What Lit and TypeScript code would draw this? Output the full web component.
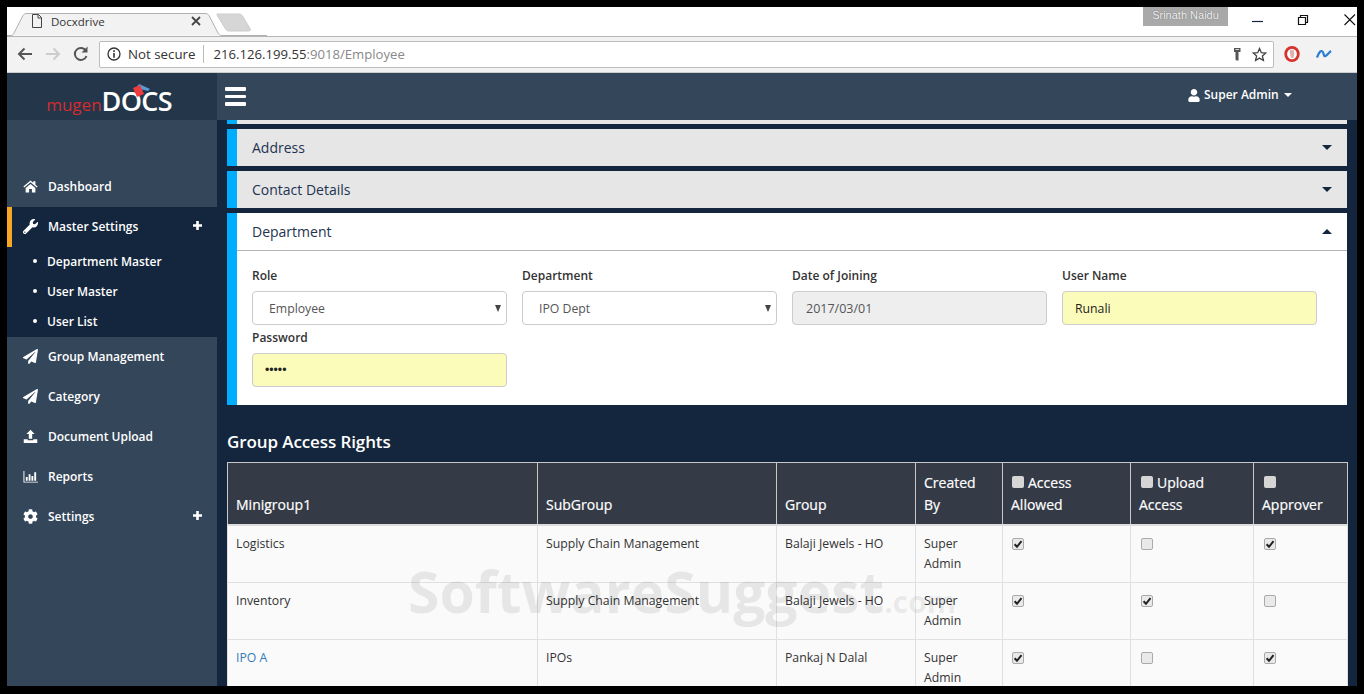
import { LitElement, html, css, svg } from "lit";
import { customElement } from "lit/decorators.js";

const FA = {
  plane: svg`<svg viewBox="0 0 512 512"><path d="M476 3.2L12.5 270.6c-18.1 10.4-15.8 35.6 2.2 43.2L121 358.4l287.3-253.2c5.5-4.9 13.3 2.6 8.6 8.3L176 407v80.5c0 23.6 28.5 32.9 42.5 15.8L282 426l124.6 52.2c14.2 6 30.4-2.9 33-18.2l72-432C515 7.8 493.3-6.8 476 3.2z"/></svg>`,
  wrench: svg`<svg viewBox="0 0 512 512"><path d="M507.73 109.1c-2.24-9.03-13.54-12.09-20.12-5.51l-74.36 74.36-67.88-11.31-11.31-67.88 74.36-74.36c6.62-6.62 3.43-17.9-5.66-20.16-47.38-11.74-99.55.91-136.58 37.93-39.64 39.64-50.55 97.1-34.05 147.2L18.74 402.76c-24.99 24.99-24.99 65.51 0 90.5 24.99 24.99 65.51 24.99 90.5 0l213.21-213.21c50.12 16.71 107.47 5.68 147.37-34.22 37.07-37.07 49.7-89.32 37.91-136.73zM64 472c-13.25 0-24-10.75-24-24 0-13.26 10.75-24 24-24s24 10.74 24 24c0 13.25-10.75 24-24 24z"/></svg>`,
  cog: svg`<svg viewBox="0 0 512 512"><path d="M487.4 315.7l-42.6-24.6c4.3-23.2 4.3-47 0-70.2l42.6-24.6c4.9-2.8 7.1-8.6 5.5-14-11.1-35.6-30-67.8-54.7-94.6-3.8-4.1-10-5.1-14.8-2.3L380.8 110c-17.9-15.4-38.5-27.3-60.8-35.1V25.8c0-5.6-3.9-10.5-9.4-11.7-36.7-8.2-74.3-7.8-109.2 0-5.5 1.2-9.4 6.1-9.4 11.7V75c-22.2 7.9-42.8 19.8-60.8 35.1L88.7 85.5c-4.9-2.8-11-1.9-14.8 2.3-24.7 26.7-43.6 58.9-54.7 94.6-1.7 5.4.6 11.2 5.5 14L67.3 221c-4.3 23.2-4.3 47 0 70.2l-42.6 24.6c-4.9 2.8-7.1 8.6-5.5 14 11.1 35.6 30 67.8 54.7 94.6 3.8 4.1 10 5.1 14.8 2.3l42.6-24.6c17.9 15.4 38.5 27.3 60.8 35.1v49.2c0 5.6 3.9 10.5 9.4 11.7 36.7 8.2 74.3 7.8 109.2 0 5.5-1.2 9.4-6.1 9.4-11.7v-49.2c22.2-7.9 42.8-19.8 60.8-35.1l42.6 24.6c4.9 2.8 11 1.9 14.8-2.3 24.7-26.7 43.6-58.9 54.7-94.6 1.5-5.5-.7-11.3-5.6-14.1zM256 336c-44.1 0-80-35.9-80-80s35.9-80 80-80 80 35.9 80 80-35.9 80-80 80z"/></svg>`,
  home: svg`<svg viewBox="0 0 16 16"><path fill-rule="evenodd" d="M8 1.600 0.400 8.100 1.300 9.100 8 3.500 14.700 9.100 15.600 8.100 13.200 6V2.400H11V4.100ZM2.800 9.600V14.400H6.500V10.600H9.500V14.400H13.200V9.600L8 5.200Z"/></svg>`,
  upload: svg`<svg viewBox="0 0 16 16"><path d="M8 .8 3.600 5.400H6.200V10.400H9.800V5.400H12.400ZM.8 11H5V12H11V11H15.200V15H.8Z"/></svg>`,
  chart: svg`<svg viewBox="0 0 16 16"><path d="M.5 2H1.500V13.500H16V14.500H.5ZM3 8.500H5V12.500H3ZM6 5.500H8V12.500H6ZM9 7.500H11V12.500H9ZM12 3.500H14V12.500H12Z"/></svg>`,
  user: svg`<svg viewBox="0 0 448 512"><path d="M224 256c70.700 0 128-57.300 128-128S294.700 0 224 0 96 57.300 96 128s57.300 128 128 128zm89.600 32h-16.700c-22.200 10.200-46.900 16-72.900 16s-50.600-5.800-72.900-16h-16.700C60.200 288 0 348.200 0 422.400V464c0 26.500 21.500 48 48 48h352c26.500 0 48-21.500 48-48v-41.600c0-74.200-60.200-134.400-134.400-134.400z"/></svg>`,
};

const check = svg`<svg viewBox="0 0 12 12"><path d="M2.600 6.200 5 8.800 9.500 3.200" fill="none" stroke="#222" stroke-width="2"/></svg>`;

const rows = [
  { mini: "Logistics", sub: "Supply Chain Management", group: "Balaji Jewels - HO", a: true, u: false, p: true },
  { mini: "Inventory", sub: "Supply Chain Management", group: "Balaji Jewels - HO", a: true, u: true, p: false },
  { mini: "IPO A", sub: "IPOs", group: "Pankaj N Dalal", a: true, u: false, p: true, link: true },
];

@customElement("app-root")
export class AppRoot extends LitElement {
  static styles = css`
    :host { display: block; width: 1364px; height: 694px; background: #000; padding: 7px 7px 8px 7px; box-sizing: border-box; overflow: hidden; font-family: "Open Sans", "Noto Sans", sans-serif; position: relative; }
    * { box-sizing: border-box; }
    .frame { height: 679px; display: flex; flex-direction: column; overflow: hidden; }

    .tabstrip { height: 29px; background: #fff; flex: none; position: relative; }
    .tabshape { position: absolute; left: 0; top: 0; }
    .tab { position: absolute; left: 24px; top: 6px; height: 16px; width: 175px; display: flex; align-items: center; gap: 8px; font-size: 11.500px; color: #333; }
    .tab svg { width: 12px; height: 14px; flex: none; }
    .tab .x { position: absolute; left: 160px; top: 1px; width: 10px; height: 10px; margin-top: 2px; }
    .badge { position: absolute; left: 1136px; top: 0; width: 85px; height: 19px; background: #a9a9a9; color: #f4f4f4; font-size: 11px; line-height: 17px; text-align: center; font-family: "Liberation Sans", sans-serif; text-shadow: 0 0 1px #555; }
    .win { position: absolute; top: 6px; width: 14px; height: 14px; }
    .toolbar { height: 37px; flex: none; background: #f2f2f2; border-top: 1px solid #b5b5b5; border-bottom: 1px solid #ccc; position: relative; display: flex; align-items: center; }
    .nav { position: absolute; top: 8px; width: 18px; height: 18px; }
    .omni { position: absolute; left: 92px; top: 4px; width: 1175px; height: 27px; background: #fff; border: 1px solid #bdbdbd; border-radius: 2px; display: flex; align-items: center; padding-bottom: 1px; color: #333; }
    .omni .info { width: 14px; height: 14px; margin: 0 7px 0 7px; flex: none; }
    .omni .ns { padding-right: 8px; border-right: 1px solid #bbb; line-height: 18px; margin-right: 9px; font-size: 13.300px; }
    .omni .url { font-size: 13.150px; color: #333; }
    .omni .url span { color: #888; }
    .omni .key { position: absolute; left: 1131px; top: 5px; width: 12px; height: 15px; }
    .omni .star { position: absolute; left: 1152px; top: 5px; width: 15px; height: 15px; }
    .ext { position: absolute; top: 8px; width: 18px; height: 18px; }

    .app { flex: 1; display: flex; min-height: 0; position: relative; }
    .side { width: 210px; flex: none; background: #34465a; display: flex; flex-direction: column; color: #fff; }
    .logo { height: 47px; background: #24364a; flex: none; position: relative; display: flex; align-items: baseline; justify-content: center; padding: 10px 6px 0 0; }
    .logo .mu { color: #d52b2f; font-size: 17px; font-weight: 500; line-height: 36px; }
    .logo .do { color: #fff; font-size: 27px; font-weight: 600; line-height: 36px; letter-spacing: -.7px; }
    .logo .mark { position: absolute; left: 124px; top: 11px; width: 19px; height: 14px; }
    .menu { margin-top: 47px; }
    .item { height: 40px; display: flex; align-items: center; padding: 0 0 2px 16px; font-size: 12px; font-weight: 600; position: relative; }
    .item > svg:first-child { width: 15px; height: 15px; fill: #fff; flex: none; margin-right: 10px; }
    .item.active { background: #14263d; border-left: 5px solid #f5a623; padding-left: 11px; }
    .plus { position: absolute; right: 15px; top: 14px; width: 9px; height: 9px; fill: #fff; }
    .subs { background: #14263d; }
    .sub { height: 30px; display: flex; align-items: center; padding: 0 0 2px 40px; font-size: 12px; font-weight: 600; position: relative; }
    .sub::before { content: ""; position: absolute; left: 26px; top: 12px; width: 4px; height: 4px; border-radius: 50%; background: #fff; }

    .mainwrap { flex: 1; display: flex; flex-direction: column; min-width: 0; background: #14263d; }
    .topbar { height: 47px; background: #34465a; flex: none; position: relative; color: #fff; }
    .burger { position: absolute; left: 8px; top: 14px; width: 21px; display: flex; flex-direction: column; gap: 4px; }
    .burger i { display: block; height: 3.500px; background: #fff; border-radius: 1px; }
    .usr { position: absolute; left: 971px; top: 13px; display: flex; align-items: center; font-size: 12px; font-weight: 600; line-height: 18px; }
    .usr svg { width: 12px; height: 13px; fill: #fff; margin-right: 4px; }
    .usr .caret { width: 0; height: 0; border-left: 4px solid transparent; border-right: 4px solid transparent; border-top: 4px solid #fff; margin-left: 5px; }

    .content { flex: 1; padding: 0 10px; overflow: hidden; min-height: 0; }
    .strip { height: 4px; background: #e6e6e6; border-left: 10px solid #00aeff; margin-bottom: 5px; }
    .panel { border-left: 10px solid #00aeff; background: #e6e6e6; margin-bottom: 5px; }
    .panel.open { background: #fff; margin-bottom: 0; }
    .phead { height: 37px; display: flex; align-items: center; justify-content: space-between; padding: 0 15px; font-size: 14px; color: #1e3350; }
    .open .phead { height: 38px; border-bottom: 1px solid #b5b5b5; }
    .tri { width: 0; height: 0; border-left: 5px solid transparent; border-right: 5px solid transparent; border-top: 5px solid #14263d; }
    .tri.up { border-top: 0; border-bottom: 5px solid #14263d; }
    .pbody { padding: 15px 15px 18px; display: grid; grid-template-columns: repeat(4, 255px); column-gap: 15px; row-gap: 3px; }
    .field label { display: block; font-size: 12px; font-weight: 600; line-height: 20px; margin-bottom: 5px; color: #333; }
    .ctl { width: 100%; height: 34px; border: 1px solid #ccc; border-radius: 4px; background: #fff; font: 12.250px "Open Sans", sans-serif; color: #555; padding: 0 16px; appearance: none; outline: none; display: block; }
    .ctl.dis { background: #eee; padding: 0 13px; font-size: 12.500px; }
    .ctl.auto { background: #fbfcb9; padding: 0 12px; color: #222; }
    .pw { font-family: "Liberation Sans", sans-serif; color: #000; }
    .selwrap { position: relative; }
    .selwrap::after { content: ""; position: absolute; right: 6px; top: 14px; border-left: 3.500px solid transparent; border-right: 3.500px solid transparent; border-top: 7px solid #444; }

    h2 { margin: 25px 0 8px; font-size: 17px; font-weight: 600; color: #fff; line-height: 24px; letter-spacing: -.1px; }
    table { border-collapse: collapse; table-layout: fixed; width: 1120px; background: #fafafa; font-size: 12.250px; color: #333; }
    th { background: #343a46; color: #fff; font-size: 14px; font-weight: 400; text-align: left; vertical-align: bottom; padding: 9px 8px 8px; line-height: 22px; border: 1px solid #c8c8c8; border-bottom: 2px solid #ddd; -webkit-text-stroke: .2px #fff; }
    td { padding: 8px; line-height: 20px; vertical-align: top; border: 1px solid #e0e0e0; height: 57px; }
    a { color: #337ab7; text-decoration: none; }
    .hb { display: inline-block; width: 12px; height: 12px; background: #d5d5d5; border-radius: 2px; margin: 0 4px 0 1px; }
    .hb.block { display: block; margin-top: 0; margin-bottom: 6px; }
    th:nth-child(n+6) .hb { margin-left: 2px; }
    .cb { display: block; width: 12px; height: 12px; margin: 4px 0 0 1px; border: 1px solid #aaa; border-radius: 2px; background: #e9e9e9; }
    td:nth-child(n+6) .cb { margin-left: 2px; }
    .cb svg { display: block; width: 12px; height: 12px; margin: -1px; }
    .wm { position: absolute; left: 401px; top: 483px; color: rgba(0,0,0,.08); font-weight: 700; font-size: 57px; line-height: 70px; white-space: nowrap; pointer-events: none; }
    .wm small { font-size: 30px; font-weight: 700; }
  `;

  render() {
    const item = (icon: unknown, label: string, plus = false, active = false) => html`
      <div class="item ${active ? "active" : ""}">${icon}<span>${label}</span>
        ${plus ? html`<svg class="plus" viewBox="0 0 9 9"><path d="M3.200 0H5.800V3.200H9V5.800H5.800V9H3.200V5.800H0V3.200H3.200Z"/></svg>` : ""}
      </div>`;
    return html`
      <div class="frame">
        <div class="tabstrip">
          <svg class="tabshape" width="260" height="29" viewBox="0 0 260 29">
            <path d="M0 28.500H4C6 28.500 6.500 27 7 26L16 8.500C17 7 18 6.500 20 6.500H198C200 6.500 201 7 202 8.500L211 26C212 27.500 213 28.500 215 28.500H260" fill="#f2f2f2" stroke="#b0b0b0"/>
            <path d="M210 7H232C234 7 235 8 236 10L243 21.500C244 23.500 243 24 241 24H222C220 24 219 23 218 21L210 8Z" fill="#d6d6d6" stroke="#ccc"/>
          </svg>
          <div class="tab">
            <svg viewBox="0 0 12 14"><path d="M1.500 .5H7.500L10.500 3.500V13.500H1.500ZM7 .5V4H10.500" fill="none" stroke="#444"/></svg>
            <span>Docxdrive</span>
            <svg class="x" viewBox="0 0 10 10"><path d="M1 1 9 9M9 1 1 9" stroke="#444" stroke-width="1.800"/></svg>
          </div>
          <div class="badge">Srinath Naidu</div>
          <svg class="win" style="left:1244px" viewBox="0 0 14 14"><path d="M1 8.500H12" stroke="#14263d" stroke-width="1.200"/></svg>
          <svg class="win" style="left:1289px" viewBox="0 0 14 14"><path d="M2.500 4.500H9.500V11.500H2.500ZM4.500 4.500V2.500H11.500V9.500H9.500" fill="none" stroke="#111" stroke-width="1.200"/></svg>
          <svg class="win" style="left:1336px" viewBox="0 0 14 14"><path d="M1.500 1.500 12 12M12 1.500 1.500 12" stroke="#111" stroke-width="1.100"/></svg>
        </div>
        <div class="toolbar">
          <svg class="nav" style="left:9px" viewBox="0 0 18 18"><path d="M16 9H3M8.500 3.500 3 9 8.500 14.500" fill="none" stroke="#555" stroke-width="2"/></svg>
          <svg class="nav" style="left:37px" viewBox="0 0 18 18"><path d="M2 9H15M9.500 3.500 15 9 9.500 14.500" fill="none" stroke="#ccc" stroke-width="2"/></svg>
          <svg class="nav" style="left:65px" viewBox="0 0 18 18"><path d="M14.500 11A6 6 0 1 1 14 5.800" fill="none" stroke="#555" stroke-width="2"/><path d="M15.500 1.500V7.500H9.500Z" fill="#555"/></svg>
          <div class="omni">
            <svg class="info" viewBox="0 0 14 14"><circle cx="7" cy="7" r="6" fill="none" stroke="#333" stroke-width="1.300"/><path d="M6.200 3.300H7.800V4.900H6.200ZM6.200 6H7.800V10.700H6.200Z" fill="#333"/></svg>
            <span class="ns">Not secure</span>
            <span class="url">216.126.199.55<span>:9018/Employee</span></span>
            <svg class="key" viewBox="0 0 12 15"><path d="M3 1H9.500V5H7.500V13.500H5.500L4.500 12.500V5H3ZM4.500 2.200V3H8V2.200Z" fill="#555" fill-rule="evenodd"/></svg>
            <svg class="star" viewBox="0 0 15 15"><path d="M7.500 1.500 9.300 5.700 13.800 6 10.400 9 11.400 13.500 7.500 11.100 3.600 13.500 4.600 9 1.200 6 5.700 5.700Z" fill="none" stroke="#444" stroke-width="1.300"/></svg>
          </div>
          <svg class="ext" style="left:1276px" viewBox="0 0 18 18"><ellipse cx="9" cy="9" rx="6.300" ry="6.700" fill="#fff" stroke="#d8322d" stroke-width="2.800"/><path d="M6.500 6.500 7.500 4.800H10.500L11.500 8 10.500 13H8Z" fill="#dcb4b1"/></svg>
          <svg class="ext" style="left:1308px" viewBox="0 0 18 18"><path d="M2 12.500C4 7 6 5 7.500 6.500 9 8 8.500 12 10.500 11 12.500 10 14 7.500 16 6" fill="none" stroke="#2b7fd0" stroke-width="2.200"/></svg>
        </div>
        <div class="app">
          <nav class="side">
            <div class="logo"><span class="mu">mugen</span><span class="do">DOCS</span>
              <svg class="mark" viewBox="0 0 19 14"><path d="M5 4 8 0 19 5 17 7Z" fill="#5b9bd5"/><path d="M2 4 9 1 13 10 6 13Z" fill="#ee3b3b"/></svg>
            </div>
            <div class="menu">
              ${item(FA.home, "Dashboard")}
              ${item(FA.wrench, "Master Settings", true, true)}
              <div class="subs">
                <div class="sub">Department Master</div>
                <div class="sub">User Master</div>
                <div class="sub">User List</div>
              </div>
              ${item(FA.plane, "Group Management")}
              ${item(FA.plane, "Category")}
              ${item(FA.upload, "Document Upload")}
              ${item(FA.chart, "Reports")}
              ${item(FA.cog, "Settings", true)}
            </div>
          </nav>
          <div class="mainwrap">
            <header class="topbar">
              <div class="burger"><i></i><i></i><i></i></div>
              <div class="usr">${FA.user}<span>Super Admin</span><span class="caret"></span></div>
            </header>
            <main class="content">
              <div class="strip"></div>
              <section class="panel"><div class="phead"><span>Address</span><span class="tri"></span></div></section>
              <section class="panel"><div class="phead"><span>Contact Details</span><span class="tri"></span></div></section>
              <section class="panel open">
                <div class="phead"><span>Department</span><span class="tri up"></span></div>
                <div class="pbody">
                  <div class="field"><label>Role</label><div class="selwrap"><select class="ctl"><option>Employee</option></select></div></div>
                  <div class="field"><label>Department</label><div class="selwrap"><select class="ctl"><option>IPO Dept</option></select></div></div>
                  <div class="field"><label>Date of Joining</label><input class="ctl dis" value="2017/03/01" disabled /></div>
                  <div class="field"><label>User Name</label><input class="ctl auto" value="Runali" /></div>
                  <div class="field"><label>Password</label><input class="ctl auto pw" type="password" value="12345" /></div>
                </div>
              </section>
              <h2>Group Access Rights</h2>
              <table>
                <colgroup><col style="width:310px"/><col style="width:239px"/><col style="width:139px"/><col style="width:87px"/><col style="width:128px"/><col style="width:123px"/><col style="width:94px"/></colgroup>
                <thead><tr>
                  <th>Minigroup1</th><th>SubGroup</th><th>Group</th><th>Created By</th>
                  <th><span class="hb"></span>Access Allowed</th>
                  <th><span class="hb"></span>Upload Access</th>
                  <th><span class="hb block"></span>Approver</th>
                </tr></thead>
                <tbody>
                  ${rows.map((r) => html`<tr>
                    <td>${r.link ? html`<a>${r.mini}</a>` : r.mini}</td><td>${r.sub}</td><td>${r.group}</td><td>Super Admin</td>
                    <td><span class="cb">${r.a ? check : ""}</span></td>
                    <td><span class="cb">${r.u ? check : ""}</span></td>
                    <td><span class="cb">${r.p ? check : ""}</span></td>
                  </tr>`)}
                </tbody>
              </table>
            </main>
          </div>
          <div class="wm">SoftwareSuggest<small>.com</small></div>
        </div>
      </div>
    `;
  }
}
